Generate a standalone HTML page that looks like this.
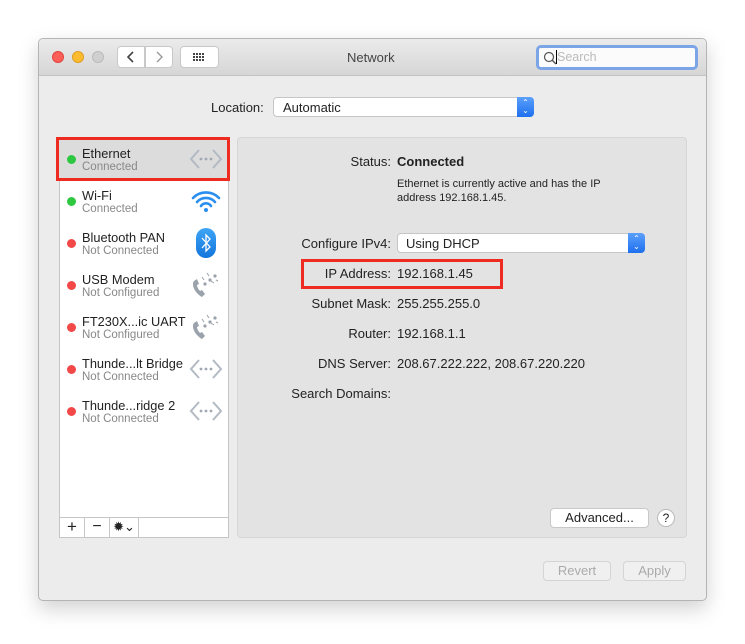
<!DOCTYPE html>
<html><head><meta charset="utf-8"><style>
*{box-sizing:border-box;margin:0;padding:0}
body{width:745px;height:644px;background:#fff;font-family:"Liberation Sans",sans-serif;font-size:13px;color:#222;position:relative;overflow:hidden}
.a{position:absolute}
.win{left:38px;top:38px;width:669px;height:563px;border:1px solid #b4b4b4;border-radius:5px;background:#ececec;box-shadow:0 8px 20px rgba(0,0,0,.18);overflow:hidden}
.tb{left:0;top:0;width:667px;height:37px;background:linear-gradient(#ebebeb,#d6d6d6);border-bottom:1px solid #c2c2c2}
.dot{width:12px;height:12px;border-radius:50%;top:12px}
.btn{background:#fff;border:1px solid #c8c8c8;border-radius:4px}
.lbl{text-align:right;width:160px;left:231px}
.item .n{font-size:12.8px;color:#222}
.item .s{font-size:11.5px;color:#888;margin-top:0px}
.sd{width:9px;height:9px;border-radius:50%}
.pop{background:#fff;border:1px solid #c6c6c6;border-radius:4px;height:20px}
.arr{position:absolute;right:-1px;top:-1px;width:17px;height:20px;background:linear-gradient(#5aa0fb,#1f6ff0);border-radius:0 4px 4px 0;color:#fff;font-size:8px;line-height:8px;text-align:center;padding-top:2px}
.red{border:3px solid #ee2b21}
</style></head><body>
<div class="a win">
 <div class="a tb">
  <div class="a dot" style="left:13px;background:#fc5f57;border:1px solid #e1443e"></div>
  <div class="a dot" style="left:33px;background:#fdbc2e;border:1px solid #df9d23"></div>
  <div class="a dot" style="left:53px;background:#cfcfcf;border:1px solid #bbb"></div>
  <div class="a btn" style="left:78px;top:7px;width:28px;height:22px;border-radius:4px 0 0 4px"><svg width="26" height="20"><path d="M15 5l-5 5 5 5" stroke="#444" stroke-width="1.6" fill="none"/></svg></div>
  <div class="a btn" style="left:106px;top:7px;width:28px;height:22px;border-radius:0 4px 4px 0"><svg width="26" height="20"><path d="M11 5l5 5-5 5" stroke="#999" stroke-width="1.4" fill="none"/></svg></div>
  <div class="a btn" style="left:141px;top:7px;width:39px;height:22px"><svg width="37" height="20"><g fill="#444"><rect x="12" y="6" width="2" height="2"/><rect x="15" y="6" width="2" height="2"/><rect x="18" y="6" width="2" height="2"/><rect x="21" y="6" width="2" height="2"/><rect x="12" y="9" width="2" height="2"/><rect x="15" y="9" width="2" height="2"/><rect x="18" y="9" width="2" height="2"/><rect x="21" y="9" width="2" height="2"/><rect x="12" y="12" width="2" height="2"/><rect x="15" y="12" width="2" height="2"/><rect x="18" y="12" width="2" height="2"/><rect x="21" y="12" width="2" height="2"/></g></svg></div>
  <div class="a" style="left:308px;top:11px;font-size:13px;color:#444">Network</div>
  <div class="a" style="left:497px;top:6px;width:162px;height:25px;border:3px solid #7ba5e6;border-radius:5px;background:#fbfbfb"><svg class="a" style="left:3px;top:2px" width="16" height="16"><circle cx="7" cy="7" r="4.5" stroke="#555" stroke-width="1.2" fill="none"/><path d="M10 10l4 4" stroke="#555" stroke-width="1.4"/></svg><div class="a" style="left:17px;top:2px;width:1px;height:14px;background:#000"></div><div class="a" style="left:18px;top:2px;color:#bbb;font-size:12.5px">Search</div></div>
 </div>
 <div class="a" style="left:172px;top:61px">Location:</div>
 <div class="a pop" style="left:234px;top:58px;width:261px"><span class="a" style="left:9px;top:2px">Automatic</span><div class="arr">⌃<br>⌄</div></div>

 <div class="a" style="left:20px;top:101px;width:170px;height:398px;background:#fff;border:1px solid #c6c6c6"></div>
 <div class="a" style="left:20px;top:478px;width:170px;height:21px;border:1px solid #c6c6c6;background:#fff">
  <div class="a" style="left:0;top:0;width:25px;height:19px;border-right:1px solid #c6c6c6;text-align:center;font-size:17px;line-height:18px">+</div>
  <div class="a" style="left:25px;top:0;width:25px;height:19px;border-right:1px solid #c6c6c6;text-align:center;font-size:16px;line-height:17px">−</div>
  <div class="a" style="left:50px;top:0;width:29px;height:19px;border-right:1px solid #c6c6c6;text-align:center;font-size:13px;line-height:18px">✹⌄</div>
 </div>
 <div class="a" style="left:20px;top:101px;width:168px;height:41px;background:#dcdcdc"></div>

 <div class="a item" style="left:43px;top:107px"><div class="n">Ethernet</div><div class="s">Connected</div></div>
 <div class="a sd" style="left:28px;top:116px;background:#2dc840"></div>
 <div class="a item" style="left:43px;top:149px"><div class="n">Wi-Fi</div><div class="s">Connected</div></div>
 <div class="a sd" style="left:28px;top:158px;background:#2dc840"></div>
 <div class="a item" style="left:43px;top:191px"><div class="n">Bluetooth PAN</div><div class="s">Not Connected</div></div>
 <div class="a sd" style="left:28px;top:200px;background:#f34848"></div>
 <div class="a item" style="left:43px;top:233px"><div class="n">USB Modem</div><div class="s">Not Configured</div></div>
 <div class="a sd" style="left:28px;top:242px;background:#f34848"></div>
 <div class="a item" style="left:43px;top:275px"><div class="n">FT230X...ic UART</div><div class="s">Not Configured</div></div>
 <div class="a sd" style="left:28px;top:284px;background:#f34848"></div>
 <div class="a item" style="left:43px;top:317px"><div class="n">Thunde...lt Bridge</div><div class="s">Not Connected</div></div>
 <div class="a sd" style="left:28px;top:326px;background:#f34848"></div>
 <div class="a item" style="left:43px;top:359px"><div class="n">Thunde...ridge 2</div><div class="s">Not Connected</div></div>
 <div class="a sd" style="left:28px;top:368px;background:#f34848"></div>

 <svg class="a" style="left:150px;top:108px" width="34" height="24"><g stroke="#b3bac3" stroke-width="2" fill="none"><path d="M10 3l-8 9 8 9M24 3l8 9-8 9"/></g><g fill="#a0a8b2"><circle cx="12" cy="12" r="1.4"/><circle cx="17" cy="12" r="1.4"/><circle cx="22" cy="12" r="1.4"/></g></svg>
 <svg class="a" style="left:150px;top:150px" width="34" height="26"><g stroke="#2a8ef0" stroke-width="2.6" fill="none" stroke-linecap="round"><path d="M4 9a18 18 0 0 1 26 0M8 13a12 12 0 0 1 18 0M12 17a6 6 0 0 1 10 0"/></g><circle cx="17" cy="21" r="2" fill="#2a8ef0"/></svg>
 <div class="a" style="left:157px;top:189px;width:20px;height:30px;border-radius:10px;background:linear-gradient(#3ea5f5,#1275dc)"><svg width="20" height="30"><path d="M6 10l8 9-4 4V7l4 4-8 9" stroke="#fff" stroke-width="1.3" fill="none"/></svg></div>
 <svg class="a" style="left:150px;top:232px" width="34" height="30"><path d="M5 10c-3 4 1 12 8 16l3-3-3-4-2 1c-2-2-3-4-3-6l2-1-2-5z" fill="#9aa2ac"/><g fill="#9aa2ac"><circle cx="16" cy="13" r="1.6"/><circle cx="21" cy="9" r="1.6"/><circle cx="26" cy="5" r="1.6"/></g><path d="M13 6l2 3M18 2l2 3M22 10l3 2M27 9l2 1" stroke="#9aa2ac" stroke-width="1"/></svg>
 <svg class="a" style="left:150px;top:274px" width="34" height="30"><path d="M5 10c-3 4 1 12 8 16l3-3-3-4-2 1c-2-2-3-4-3-6l2-1-2-5z" fill="#9aa2ac"/><g fill="#9aa2ac"><circle cx="16" cy="13" r="1.6"/><circle cx="21" cy="9" r="1.6"/><circle cx="26" cy="5" r="1.6"/></g><path d="M13 6l2 3M18 2l2 3M22 10l3 2M27 9l2 1" stroke="#9aa2ac" stroke-width="1"/></svg>
 <svg class="a" style="left:150px;top:318px" width="34" height="24"><g stroke="#b3bac3" stroke-width="2" fill="none"><path d="M10 3l-8 9 8 9M24 3l8 9-8 9"/></g><g fill="#a0a8b2"><circle cx="12" cy="12" r="1.4"/><circle cx="17" cy="12" r="1.4"/><circle cx="22" cy="12" r="1.4"/></g></svg>
 <svg class="a" style="left:150px;top:360px" width="34" height="24"><g stroke="#b3bac3" stroke-width="2" fill="none"><path d="M10 3l-8 9 8 9M24 3l8 9-8 9"/></g><g fill="#a0a8b2"><circle cx="12" cy="12" r="1.4"/><circle cx="17" cy="12" r="1.4"/><circle cx="22" cy="12" r="1.4"/></g></svg>
 <div class="a red" style="left:17px;top:98px;width:174px;height:44px"></div>

 <div class="a" style="left:198px;top:98px;width:450px;height:401px;background:#e3e3e3;border:1px solid #d6d6d6;border-radius:4px"></div>
</div>
<div class="a lbl" style="top:154px">Status:</div>
<div class="a" style="left:397px;top:154px;font-weight:bold">Connected</div>
<div class="a" style="left:397px;top:177px;font-size:11px;line-height:14px;width:240px">Ethernet is currently active and has the IP address 192.168.1.45.</div>
<div class="a lbl" style="top:236px">Configure IPv4:</div>
<div class="a pop" style="left:397px;top:233px;width:248px"><span class="a" style="left:8px;top:2px">Using DHCP</span><div class="arr">⌃<br>⌄</div></div>
<div class="a lbl" style="top:266px">IP Address:</div>
<div class="a" style="left:397px;top:266px">192.168.1.45</div>
<div class="a red" style="left:301px;top:259px;width:202px;height:30px"></div>
<div class="a lbl" style="top:296px">Subnet Mask:</div>
<div class="a" style="left:397px;top:296px">255.255.255.0</div>
<div class="a lbl" style="top:326px">Router:</div>
<div class="a" style="left:397px;top:326px">192.168.1.1</div>
<div class="a lbl" style="top:356px">DNS Server:</div>
<div class="a" style="left:397px;top:356px">208.67.222.222, 208.67.220.220</div>
<div class="a lbl" style="top:386px">Search Domains:</div>
<div class="a btn" style="left:550px;top:508px;width:99px;height:20px;text-align:center;line-height:18px">Advanced...</div>
<div class="a" style="left:657px;top:509px;width:18px;height:18px;border-radius:50%;background:#fff;border:1px solid #bbb;text-align:center;font-size:12px;line-height:16px">?</div>
<div class="a" style="left:543px;top:561px;width:68px;height:20px;border:1px solid #d4d4d4;border-radius:4px;background:#f0f0f0;text-align:center;line-height:18px;color:#aaa">Revert</div>
<div class="a" style="left:623px;top:561px;width:63px;height:20px;border:1px solid #d4d4d4;border-radius:4px;background:#f0f0f0;text-align:center;line-height:18px;color:#aaa">Apply</div>
</body></html>
